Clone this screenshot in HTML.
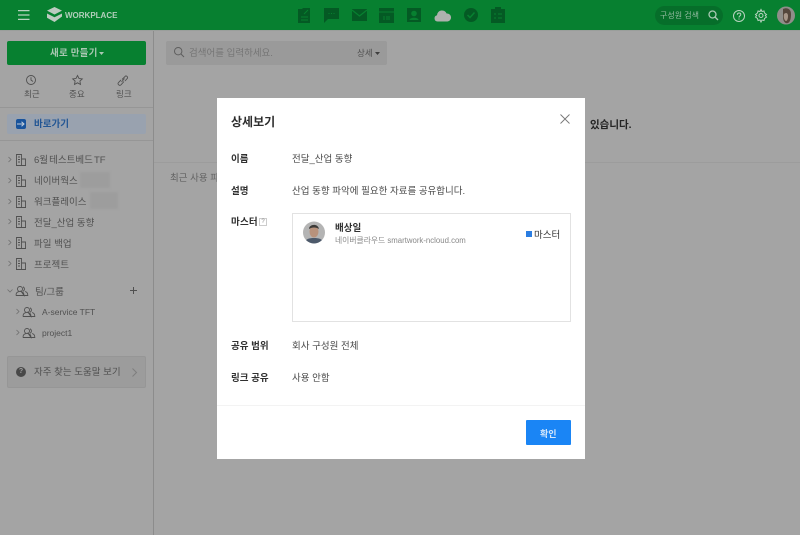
<!DOCTYPE html>
<html lang="ko"><head><meta charset="utf-8"><style>
*{box-sizing:border-box}
html,body{margin:0;padding:0}
body{width:800px;height:535px;overflow:hidden;position:relative;background:#a4a4a4;font-family:"Liberation Sans","Noto Sans CJK KR",sans-serif;font-size:9.5px;color:#444}
.a{position:absolute}
.t{position:absolute;white-space:nowrap;line-height:14px;letter-spacing:0}
svg{position:absolute;overflow:visible}
.side{color:#505050}
.b{font-weight:700;color:#303030}
.m{color:#484848}
</style></head><body>
<!-- header -->
<div class="a" style="left:0;top:0;width:800px;height:30px;background:#078030"></div>
<div class="a" style="left:0;top:30px;width:800px;height:1px;background:#9a9e9b"></div>
<svg style="left:18px;top:10px" width="12" height="10" fill="none" stroke="#b8d3c0" stroke-width="1.2"><path d="M0 .6h11.500M0 5h11.500M0 9.400h11.500"/></svg>
<svg style="left:47px;top:7px" width="16" height="16"><path d="M7.500 0L15 3.600 7.500 7.500 0 3.600z" fill="#bccbc0"/><path d="M0 6.500l7.500 3.700L15 6.500v3L7.500 15 0 10.800z" fill="#bccbc0"/></svg>
<div class="t" style="left:65px;top:9px;color:#b2cebb;font-weight:700;font-size:8px">WORKPLACE</div>
<!-- app icons -->
<svg style="left:297px;top:8px" width="15" height="15"><path d="M1 1h4l1-1h7v15H1z" fill="#045a24"/><path d="M4 9h7M4 12h7M7 6l4-4" stroke="#078030" stroke-width="1"/></svg>
<svg style="left:324px;top:8px" width="15" height="15"><path d="M0 0h15v11H4l-4 4z" fill="#045a24"/><path d="M4.500 5.500h1M7 5.500h1M9.500 5.500h1" stroke="#078030"/></svg>
<svg style="left:352px;top:9px" width="15" height="12"><path d="M0 0h15v12H0z" fill="#045a24"/><path d="M0 1l7.500 6 7.500-6" stroke="#078030" stroke-width="1.200" fill="none"/></svg>
<svg style="left:379px;top:8px" width="15" height="15"><path d="M0 0h15v15H0z" fill="#045a24"/><path d="M0 4h15" stroke="#078030"/><path d="M5 8v4M8 8v4M10 8v4" stroke="#078030"/></svg>
<svg style="left:407px;top:8px" width="14" height="14"><path d="M0 0h14v14H0z" fill="#045a24"/><circle cx="7" cy="5.500" r="2.800" fill="#078030"/><path d="M2.500 12c0-3 9-3 9 0z" fill="#078030"/></svg>
<svg style="left:434px;top:8px" width="17" height="14"><path d="M3.500 13.500a3.200 3.200 0 0 1-.5-6.300A5 5 0 0 1 12.600 5.500a4 4 0 0 1 .9 8z" fill="#aeb2ae"/></svg>
<svg style="left:464px;top:8px" width="14" height="14"><circle cx="7" cy="7" r="7" fill="#045a24"/><path d="M3.500 7l2.500 2.500 4.500-5" stroke="#078030" stroke-width="1.500" fill="none"/></svg>
<svg style="left:491px;top:7px" width="14" height="16"><path d="M0 2h4V0h6v2h4v14H0z" fill="#045a24"/><path d="M3 7h2M7 7h4M3 11h2M7 11h4" stroke="#078030"/></svg>
<!-- header right -->
<div class="a" style="left:655px;top:6px;width:68px;height:19px;border-radius:10px;background:#066e2a"></div>
<div class="t" style="left:660px;top:9px;font-size:8px;color:#97bca3">구성원 검색</div>
<svg style="left:708px;top:10px" width="11" height="11" fill="none" stroke="#aac9b4" stroke-width="1.300"><circle cx="4.500" cy="4.500" r="3.500"/><path d="M7 7l3 3"/></svg>
<svg style="left:733px;top:10px" width="12" height="12" fill="none" stroke="#b8d3c0"><circle cx="6" cy="6" r="5.500"/><path d="M4.300 4.700c0-2.300 3.500-2.300 3.500-.2 0 1.300-1.800 1.300-1.800 3M6 8.500v1"/></svg>
<svg style="left:755px;top:9px" width="12" height="13" fill="none" stroke="#b8d3c0"><path d="M6 .5l1 2 2-.5 .5 2 2 1.500-1.200 1 1.200 1.500-2 1.500-.5 2-2-.5-1 2-1-2-2 .5-.5-2-2-1.500 1.200-1.500L.5 5.500l2-1.500.5-2 2 .5z"/><circle cx="6" cy="6.500" r="2"/></svg>
<svg style="left:777px;top:6px" width="18" height="19"><circle cx="9" cy="9.500" r="9" fill="#8f8e8a"/><path d="M6 3c4-2 8 0 8 5s-1 8-3 9c-3 1-5-2-5-6z" fill="#54473c"/><path d="M7 8c2-2 4-1 4 2s-1 5-2 5-3-3-2-7z" fill="#a69688"/></svg>
<!-- sidebar -->
<div class="a" style="left:153px;top:31px;width:1px;height:504px;background:#8c8c8c"></div>
<div class="a" style="left:7px;top:41px;width:139px;height:24px;background:#078030;border-radius:2px"></div>
<div class="t" style="left:50px;top:47px;color:#aac8b3;font-size:9.500px;font-weight:700;letter-spacing:.2px">새로 만들기</div>
<svg style="left:99px;top:52px" width="5" height="3"><path d="M0 0h5L2.500 3z" fill="#aac8b3"/></svg>
<svg style="left:26px;top:75px" width="10" height="10" fill="none" stroke="#505050" stroke-width=".9"><circle cx="5" cy="5" r="4.500"/><path d="M5 2.200V5l2 1.500"/></svg>
<svg style="left:72px;top:75px" width="11" height="10" fill="none" stroke="#505050" stroke-width=".9"><path d="M5.500.5l1.500 3 3.300.4-2.400 2.200.6 3.300-3-1.600-3 1.600.6-3.300L.7 3.900 4 3.500z"/></svg>
<svg style="left:118px;top:75px" width="10" height="11" fill="none" stroke="#505050" stroke-width=".9"><path d="M4 4.500l3.500-3.500a1.700 1.700 0 0 1 2 2.200L7 6M6 6.500L3 9.800a1.700 1.700 0 0 1-2.500-2.300L3 5M3.500 7l3-3.500"/></svg>
<div class="t side" style="left:24px;top:87px;font-size:8.500px">최근</div>
<div class="t side" style="left:69px;top:87px;font-size:8.500px">중요</div>
<div class="t side" style="left:116px;top:87px;font-size:8.500px">링크</div>
<div class="a" style="left:0;top:107px;width:153px;height:1px;background:#969696"></div>
<div class="a" style="left:7px;top:114px;width:139px;height:20px;background:#99a2af;border-radius:2px"></div>
<div class="a" style="left:16px;top:119px;width:10px;height:10px;background:#18539c;border-radius:2px"></div>
<svg style="left:17px;top:121px" width="8" height="6" fill="none" stroke="#c2cdda"><path d="M0 3h7M4.500 .8L7 3 4.500 5.200"/></svg>
<div class="t" style="left:34px;top:118px;color:#235694;font-weight:700">바로가기</div>
<div class="a" style="left:0;top:140px;width:153px;height:1px;background:#969696"></div>
<!-- tree items -->
<svg style="left:8px;top:157px" width="4" height="130" fill="none" stroke="#707070" stroke-width=".8"><path d="M.5 0l2.500 2.500L.5 5M.5 21l2.500 2.500L.5 26M.5 42l2.500 2.500L.5 47M.5 62l2.500 2.500L.5 67M.5 83l2.500 2.500L.5 88M.5 104l2.500 2.500L.5 109"/></svg>
<svg style="left:16px;top:154px" width="10" height="12" fill="none" stroke="#505050" stroke-width=".9"><path d="M.5 11.500V.5h5v11M5.500 5h4v6.500M0 11.500h10M2 3h2M2 5.500h2M2 8h2"/></svg>
<svg style="left:16px;top:175px" width="10" height="12" fill="none" stroke="#505050" stroke-width=".9"><path d="M.5 11.500V.5h5v11M5.500 5h4v6.500M0 11.500h10M2 3h2M2 5.500h2M2 8h2"/></svg>
<svg style="left:16px;top:196px" width="10" height="12" fill="none" stroke="#505050" stroke-width=".9"><path d="M.5 11.500V.5h5v11M5.500 5h4v6.500M0 11.500h10M2 3h2M2 5.500h2M2 8h2"/></svg>
<svg style="left:16px;top:216px" width="10" height="12" fill="none" stroke="#505050" stroke-width=".9"><path d="M.5 11.500V.5h5v11M5.500 5h4v6.500M0 11.500h10M2 3h2M2 5.500h2M2 8h2"/></svg>
<svg style="left:16px;top:237px" width="10" height="12" fill="none" stroke="#505050" stroke-width=".9"><path d="M.5 11.500V.5h5v11M5.500 5h4v6.500M0 11.500h10M2 3h2M2 5.500h2M2 8h2"/></svg>
<svg style="left:16px;top:258px" width="10" height="12" fill="none" stroke="#505050" stroke-width=".9"><path d="M.5 11.500V.5h5v11M5.500 5h4v6.500M0 11.500h10M2 3h2M2 5.500h2M2 8h2"/></svg>
<div class="t side" style="left:34px;top:154px;word-spacing:-1.500px">6월 테스트베드 TF</div>
<div class="t side" style="left:34px;top:175px">네이버웍스</div>
<div class="a" style="left:80px;top:172px;width:30px;height:16px;background:#9d9d9d;filter:blur(1px)"></div>
<div class="t side" style="left:34px;top:196px">워크플레이스</div>
<div class="a" style="left:90px;top:192px;width:28px;height:17px;background:#9d9d9d;filter:blur(1px)"></div>
<div class="t side" style="left:34px;top:217px">전달_산업 동향</div>
<div class="t side" style="left:34px;top:238px">파일 백업</div>
<div class="t side" style="left:34px;top:259px">프로젝트</div>
<svg style="left:7px;top:289px" width="6" height="4" fill="none" stroke="#707070" stroke-width=".8"><path d="M.5 .5L3 3l2.500-2.500"/></svg>
<svg style="left:16px;top:286px" width="12" height="10" fill="none" stroke="#505050" stroke-width=".9"><circle cx="4" cy="3" r="2.500"/><path d="M0 9.500c0-3 1.500-3.500 2.800-4M5.200 5.500c1.300.5 2.800 1 2.800 4zM0 9.500h8M7 .8a2.500 2.500 0 0 1 0 4.500M9 5.500c1.500.5 2.800 1 2.800 4H8"/></svg>
<div class="t side" style="left:35px;top:286px">팀/그룹</div>
<svg style="left:130px;top:287px" width="7" height="7" stroke="#505050" stroke-width="1"><path d="M3.500 0v7M0 3.500h7"/></svg>
<svg style="left:16px;top:309px" width="4" height="50" fill="none" stroke="#707070" stroke-width=".8"><path d="M.5 0L3 2.500.5 5M.5 21L3 23.500.5 26"/></svg>
<svg style="left:23px;top:307px" width="12" height="10" fill="none" stroke="#505050" stroke-width=".9"><circle cx="4" cy="3" r="2.500"/><path d="M0 9.500c0-3 1.500-3.500 2.800-4M5.200 5.500c1.300.5 2.800 1 2.800 4zM0 9.500h8M7 .8a2.500 2.500 0 0 1 0 4.500M9 5.500c1.500.5 2.800 1 2.800 4H8"/></svg>
<svg style="left:23px;top:328px" width="12" height="10" fill="none" stroke="#505050" stroke-width=".9"><circle cx="4" cy="3" r="2.500"/><path d="M0 9.500c0-3 1.500-3.500 2.800-4M5.200 5.500c1.300.5 2.800 1 2.800 4zM0 9.500h8M7 .8a2.500 2.500 0 0 1 0 4.500M9 5.500c1.500.5 2.800 1 2.800 4H8"/></svg>
<div class="t side" style="left:42px;top:305px;font-size:8.500px">A-service TFT</div>
<div class="t side" style="left:42px;top:326px;font-size:8.500px">project1</div>
<div class="a" style="left:7px;top:356px;width:139px;height:32px;background:#9c9c9c;border:1px solid #969696;border-radius:2px"></div>
<div class="a" style="left:16px;top:367px;width:10px;height:10px;border-radius:50%;background:#484848;color:#a0a0a0;font-size:7px;font-weight:700;line-height:10px;text-align:center">?</div>
<div class="t side" style="left:34px;top:366px">자주 찾는 도움말 보기</div>
<svg style="left:132px;top:368px" width="5" height="9" fill="none" stroke="#7e7e7e"><path d="M.5 .5l4 4-4 4"/></svg>
<!-- main -->
<div class="a" style="left:166px;top:41px;width:221px;height:24px;background:#9a9a9a;border-radius:2px"></div>
<svg style="left:174px;top:47px" width="10" height="11" fill="none" stroke="#5e5e5e" stroke-width="1"><circle cx="4.200" cy="4.200" r="3.700"/><path d="M7 7l3 3"/></svg>
<div class="t" style="left:189px;top:47px;color:#757575">검색어를 입력하세요.</div>
<div class="t" style="left:357px;top:46px;color:#505050;font-size:8.500px">상세</div>
<svg style="left:375px;top:52px" width="5" height="3"><path d="M0 0h5L2.500 3z" fill="#3e3e3e"/></svg>
<div class="t" style="left:590px;top:118px;color:#242424;font-weight:700;font-size:10.500px">있습니다.</div>
<div class="a" style="left:154px;top:162px;width:646px;height:1px;background:#9c9c9c"></div>
<div class="t" style="left:170px;top:172px;color:#636363">최근 사용 파</div>
<!-- modal -->
<div class="a" style="left:217px;top:98px;width:368px;height:361px;background:#fff"></div>
<div class="t" style="left:231px;top:115px;font-size:12px;font-weight:700;color:#2d2d2d">상세보기</div>
<svg style="left:560px;top:114px" width="10" height="10" stroke="#777" stroke-width=".9"><path d="M.5 .5l9 9M9.500 .5l-9 9"/></svg>
<div class="t b" style="left:231px;top:153px">이름</div>
<div class="t m" style="left:292px;top:153px">전달_산업 동향</div>
<div class="t b" style="left:231px;top:185px">설명</div>
<div class="t m" style="left:292px;top:185px">산업 동향 파악에 필요한 자료를 공유합니다.</div>
<div class="t b" style="left:231px;top:216px;letter-spacing:.2px">마스터</div>
<div class="a" style="left:259px;top:218px;width:8px;height:8px;border:1px solid #ccc;color:#888;font-size:6px;line-height:6px;text-align:center">?</div>
<div class="a" style="left:292px;top:213px;width:279px;height:109px;border:1px solid #e2e2e2"></div>
<svg style="left:303px;top:221px" width="22" height="23"><defs><clipPath id="c"><circle cx="11" cy="11.500" r="11"/></clipPath></defs><g clip-path="url(#c)"><path d="M0 0h22v23H0z" fill="#b4b4b4"/><path d="M1 23c1-5 5-6 10-6s9 1 10 6z" fill="#4d5a6b"/><ellipse cx="11" cy="10.500" rx="4.500" ry="6" fill="#b8927c"/><path d="M6 8c0-5 9-6 10 0-3-2-7-2-10 0z" fill="#3c3a38"/></g></svg>
<div class="t" style="left:335px;top:222px;color:#303030;font-weight:700">배상일</div>
<div class="t" style="left:335px;top:234px;color:#888;font-size:7.800px">네이버클라우드 smartwork-ncloud.com</div>
<div class="a" style="left:526px;top:231px;width:6px;height:6px;background:#2a7de1"></div>
<div class="t" style="left:534px;top:229px;color:#333">마스터</div>
<div class="t b" style="left:231px;top:340px">공유 범위</div>
<div class="t m" style="left:292px;top:340px">회사 구성원 전체</div>
<div class="t b" style="left:231px;top:372px">링크 공유</div>
<div class="t m" style="left:292px;top:372px">사용 안함</div>
<div class="a" style="left:217px;top:405px;width:368px;height:1px;background:#f3f3f3"></div>
<div class="a" style="left:526px;top:420px;width:45px;height:25px;background:#1a85f5;border-radius:1px"></div>
<div class="t" style="left:540px;top:427px;color:#d4e7fb;font-weight:700;font-size:9px">확인</div>
</body></html>
